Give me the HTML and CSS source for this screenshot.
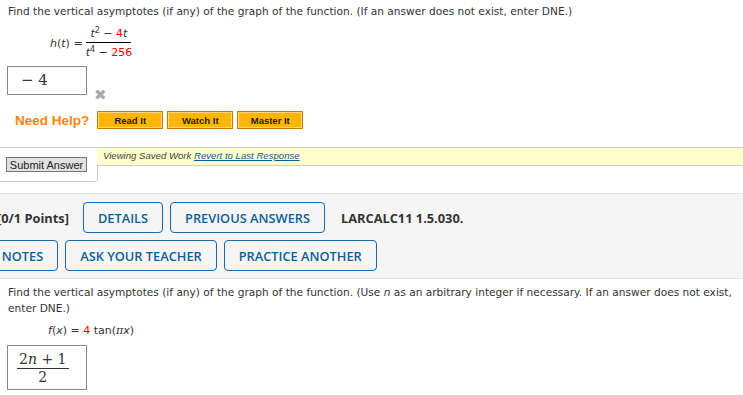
FILE: index.html
```html
<!DOCTYPE html>
<html lang="en">
<head>
  <meta charset="UTF-8" />
  <meta name="viewport" content="width=device-width, initial-scale=1.0" />
  <title>WebAssign</title>
  <link rel="stylesheet" href="styles.css">
</head>
<body>
  <div class="question">
    <p class="prompt">Find the vertical asymptotes (if any) of the graph of the function. (If an answer does not exist, enter DNE.)</p>

    <div class="formula">
      <span class="lhs"><i>h</i>(<i>t</i>) =</span>
      <span class="frac">
        <span class="num"><i>t</i><sup>2</sup> &minus; <span class="red">4</span><i>t</i></span>
        <span class="den"><i>t</i><sup>4</sup> &minus; <span class="red">256</span></span>
      </span>
    </div>

    <div class="answer-row">
      <div class="answer-box">&minus; 4</div>
      <span class="wrong">&#10006;</span>
    </div>

    <div class="help-row">
      <span class="need-help">Need Help?</span>
      <button class="help-btn">Read It</button>
      <button class="help-btn">Watch It</button>
      <button class="help-btn">Master It</button>
    </div>
  </div>

  <div class="submit-row">
    <div class="submit-cell">
      <button class="submit-btn">Submit Answer</button>
    </div>
    <div class="saved-bar">
      Viewing Saved Work <a href="#">Revert to Last Response</a>
    </div>
  </div>

  <div class="q-header">
    <div class="q-row first">
      <span class="points">[0/1 Points]</span>
      <button class="q-btn">DETAILS</button>
      <button class="q-btn">PREVIOUS ANSWERS</button>
      <span class="q-code">LARCALC11 1.5.030.</span>
    </div>
    <div class="q-row second">
      <button class="q-btn">MY NOTES</button>
      <button class="q-btn">ASK YOUR TEACHER</button>
      <button class="q-btn">PRACTICE ANOTHER</button>
    </div>
  </div>

  <div class="question lower">
    <p class="prompt">Find the vertical asymptotes (if any) of the graph of the function. (Use <i>n</i> as an arbitrary integer if necessary. If an answer does not exist, enter DNE.)</p>

    <div class="formula plain">
      <i>f</i>(<i>x</i>) = <span class="red">4</span> tan(<i class="pi">&pi;</i><i>x</i>)
    </div>

    <div class="answer-box tall">
      <span class="mfrac">
        <span class="mnum">2<i>n</i> + 1</span>
        <span class="mden">2</span>
      </span>
    </div>
  </div>
</body>
</html>
```

FILE: styles.css
```css
body {
  margin: 0;
  font-family: "DejaVu Sans", Verdana, sans-serif;
  font-size: 11px;
  color: #333;
  background-color: #fff;
  overflow: hidden;
}

.question {
  padding: 3px 8px 0;
}

.prompt {
  margin: 0;
  font-size: 10.6px;
  line-height: 16px;
}

.red {
  color: #e00;
}

.formula {
  display: flex;
  align-items: center;
  margin: 7px 0 0 42px;
}

.lhs {
  margin-right: 2px;
}

.frac {
  display: inline-flex;
  flex-direction: column;
  align-items: center;
  padding: 0 1px;
}

.num {
  padding: 0 4px 1px;
  border-bottom: 1px solid #000;
  line-height: 15px;
}

.den {
  padding-top: 2px;
  line-height: 15px;
}

.frac sup {
  font-size: 8px;
  vertical-align: 4px;
  line-height: 0;
}

.answer-row {
  display: flex;
  align-items: flex-end;
  margin-top: 6px;
}

.answer-box {
  box-sizing: border-box;
  width: 80px;
  height: 29px;
  margin-left: -1px;
  border: 1px solid #888;
  font-family: "DejaVu Serif", "Liberation Serif", serif;
  font-size: 15px;
  padding: 4px 0 0 13px;
  color: #333;
}

.wrong {
  color: #aaa;
  font-size: 15px;
  line-height: 14px;
  margin: 0 0 -7px 7px;
}

.help-row {
  display: flex;
  align-items: center;
  margin-top: 16px;
  padding-left: 7px;
}

.need-help {
  font-family: "Liberation Sans", Arial, sans-serif;
  font-weight: bold;
  font-size: 13.5px;
  color: #ff8300;
  margin-right: 8px;
}

.help-btn {
  width: 66px;
  height: 18px;
  margin-right: 4px;
  padding: 0;
  border: 1px solid #c97a00;
  box-shadow: inset 0 0 0 1px #ffd77a;
  background-color: #ffb600;
  font-family: "Liberation Sans", Arial, sans-serif;
  font-weight: bold;
  font-size: 9.5px;
  color: #222;
}

.submit-row {
  display: flex;
  align-items: flex-start;
  margin-top: 18px;
}

.submit-cell {
  box-sizing: border-box;
  width: 99px;
  height: 35px;
  margin-left: -1px;
  border: 1px solid #ccc;
  border-bottom-right-radius: 4px;
  padding: 9px 0 0 6px;
}

.submit-btn {
  width: 81px;
  height: 15px;
  padding: 0;
  border: 1px solid #777;
  background-color: #e1e1e1;
  font-family: "Liberation Sans", Arial, sans-serif;
  font-size: 11px;
  line-height: 12px;
  color: #222;
}

.saved-bar {
  flex: 1;
  box-sizing: border-box;
  height: 19px;
  margin-left: -1px;
  border-top: 1px solid #ccc;
  border-bottom: 1px solid #ccc;
  background-color: #ffffcc;
  padding: 2px 0 0 6px;
  font-family: "Liberation Sans", Arial, sans-serif;
  font-style: italic;
  font-size: 9.6px;
  color: #444;
}

.saved-bar a {
  color: #0b5e8e;
}

.q-header {
  margin-top: 11px;
  border-top: 1px solid #ddd;
  border-bottom: 1px solid #ddd;
  background-color: #f5f5f5;
  padding: 8px 0 7px;
  font-family: "Open Sans", sans-serif;
  font-size: 12.8px;
}

.q-row {
  display: flex;
  align-items: center;
  gap: 7px;
}

.q-row.first {
  margin-left: -3px;
}

.q-row.second {
  margin-top: 7px;
  margin-left: -36px;
}

.points {
  font-weight: bold;
  color: #333;
  margin-right: 7px;
}

.q-code {
  font-weight: bold;
  color: #333;
  margin-left: 9px;
}

.q-btn {
  height: 31px;
  padding: 0 14px;
  border: 1px solid #1a6aa3;
  border-radius: 4px;
  background-color: transparent;
  font-family: "Open Sans", sans-serif;
  font-weight: 600;
  font-size: 12.8px;
  color: #0d5f95;
}

.lower {
  padding-top: 5px;
}

.plain {
  display: block;
  margin: 8px 0 0 40px;
}

.pi {
  font-family: "DejaVu Serif", serif;
}

.answer-box.tall {
  height: 45px;
  margin-top: 8px;
  padding: 4px 0 0 9px;
}

.mfrac {
  display: inline-flex;
  flex-direction: column;
  align-items: center;
  font-size: 14px;
}

.mnum {
  padding: 0 2px 1px;
  border-bottom: 1px solid #333;
  line-height: 15px;
}

.mden {
  line-height: 17px;
}
```
